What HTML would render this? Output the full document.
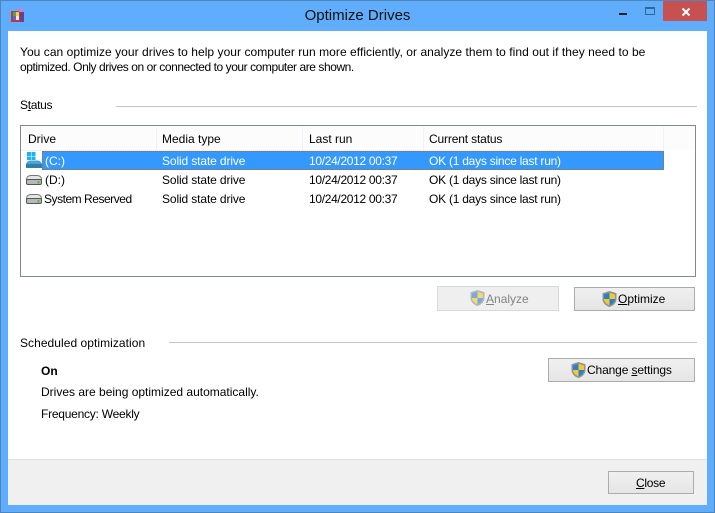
<!DOCTYPE html>
<html><head><meta charset="utf-8"><style>
html,body{margin:0;padding:0}
body{width:715px;height:513px;position:relative;overflow:hidden;background:#5fadfb;font:12px/16px "Liberation Sans",sans-serif;color:#000}
.a{position:absolute;white-space:nowrap}
.btn{position:absolute;box-sizing:border-box;border:1px solid #acacac;background:linear-gradient(#f0f0f0,#e5e5e5);text-align:center}
.sep{position:absolute;height:1px;background:#c4c4c4}
.col{position:absolute;top:127px;height:23px;width:1px;background:#eef2f8}
.s{letter-spacing:-.12px}.d{letter-spacing:-.32px}.k{letter-spacing:-.24px}
</style></head><body>
<svg width="0" height="0" style="position:absolute"><defs>
<g id="sh"><path d="M7.500 0 14.500 2.300V8C14.500 12 11 15 7.500 16 4 15 .5 12 .5 8V2.300Z" fill="#8f9296"/><path d="M7.500 1.800V8H2V3.500Z" fill="#2a7fd0"/><path d="M7.500 1.800 13 3.500V8H7.500Z" fill="#f4c92e"/><path d="M2 8H7.500V14.300C5 13.300 2 11.300 2 8Z" fill="#f4c92e"/><path d="M13 8H7.500V14.300C10 13.300 13 11.300 13 8Z" fill="#2a7fd0"/></g>
<g id="hd"><path d="M.5 7C1 4.500 3 3.500 5 3.500H11C13 3.500 15 4.500 15.500 7V8H.5Z" fill="#e4e6e6" stroke="#777"/><rect x=".5" y="7.500" width="15" height="5" rx="1.500" fill="#b4b9ba" stroke="#555"/><rect x="11.500" y="9" width="2" height="2.500" fill="#54c02c"/></g>
</defs></svg>

<div class="a" style="left:0;top:0;width:713px;height:511px;border:1px solid #4d86bd"></div>
<svg class="a" style="left:10px;top:8px" width="16" height="16"><rect x="1" y="3" width="10" height="11" fill="#c8333c"/><rect x="3" y="4" width="3" height="4" fill="#4fa84f"/><rect x="6" y="4" width="3" height="4" fill="#e8d84e"/><rect x="3" y="8" width="3" height="4" fill="#3b78c8"/><rect x="6" y="8" width="3" height="4" fill="#eee"/><rect x="10" y="4" width="4" height="10" fill="#6b3f8f"/><rect x="9" y="0" width="4" height="4" fill="#c87fd8"/></svg>
<div class="a" style="left:0;top:6px;width:715px;text-align:center;font-size:15px;line-height:20px;color:#111">Optimize Drives</div>

<svg class="a" style="left:619px;top:7px" width="40" height="12">
<rect x="0" y="6" width="8" height="2" fill="#222"/>
<rect x="26.500" y="0.500" width="9" height="7" fill="none" stroke="#2f6797"/><rect x="26" y="0" width="10" height="2" fill="#2f6797"/>
</svg>
<div class="a" style="left:663px;top:1px;width:44px;height:20px;background:#c75050"></div>
<svg class="a" style="left:680px;top:6px" width="12" height="12"><path d="M2.500 2.500 9.500 9.500M9.500 2.500 2.500 9.500" stroke="#fff" stroke-width="2" fill="none"/></svg>

<div class="a" style="left:8px;top:31px;width:699px;height:474px;background:#fff"></div>
<div class="a" style="left:8px;top:459px;width:699px;height:46px;background:#f0f0f0;border-top:1px solid #dfdfdf;box-sizing:border-box"></div>

<div class="a" style="left:20px;top:44px;letter-spacing:.05px">You can optimize your drives to help your computer run more efficiently, or analyze them to find out if they need to be</div>
<div class="a" style="left:20px;top:59px;letter-spacing:-.44px">optimized. Only drives on or connected to your computer are shown.</div>

<div class="a" style="left:20px;top:97px;letter-spacing:-.3px">S<u>t</u>atus</div>
<div class="sep" style="left:116px;top:106px;width:581px"></div>

<div class="a" style="left:20px;top:125px;width:676px;height:152px;box-sizing:border-box;border:1px solid #828790"></div>
<div class="a" style="left:21px;top:126px;width:674px;height:24px;background:#fcfcfc"></div>
<div class="a" style="left:21px;top:150px;width:643px;height:1px;background:#eef2f8"></div>
<div class="col" style="left:156px"></div><div class="col" style="left:302px"></div><div class="col" style="left:423px"></div><div class="col" style="left:663px"></div>
<div class="a" style="left:28px;top:131px">Drive</div>
<div class="a" style="left:162px;top:131px">Media type</div>
<div class="a" style="left:309px;top:131px">Last run</div>
<div class="a" style="left:429px;top:131px;letter-spacing:-.15px">Current status</div>

<div class="a" style="left:42px;top:151px;width:622px;height:19px;background:#3399ff;outline:1px dotted #b06a20;outline-offset:-1px"></div>
<svg class="a" style="left:26px;top:151px" width="16" height="19"><rect x="1" y="1" width="4" height="4" fill="#1fb4e8"/><rect x="5.500" y="1" width="4" height="4" fill="#1fb4e8"/><rect x="1" y="5.500" width="4" height="3.500" fill="#1fb4e8"/><rect x="5.500" y="5.500" width="4" height="3.500" fill="#1fb4e8"/><path d="M0 13C1 10 3 9.500 5 9.500H11C13 9.500 15 10 16 13V17H0Z" fill="#4aa3d8"/><rect x="0" y="13" width="16" height="4" fill="#2f7fa8"/></svg>
<svg class="a" style="left:26px;top:172px" width="16" height="15"><use href="#hd"/></svg>
<svg class="a" style="left:26px;top:191px" width="16" height="15"><use href="#hd"/></svg>

<div class="a" style="left:45px;top:153px;color:#fff">(C:)</div>
<div class="a s" style="left:162px;top:153px;color:#fff">Solid state drive</div>
<div class="a d" style="left:309px;top:153px;color:#fff">10/24/2012 00:37</div>
<div class="a k" style="left:429px;top:153px;color:#fff">OK (1 days since last run)</div>

<div class="a" style="left:45px;top:172px">(D:)</div>
<div class="a s" style="left:162px;top:172px">Solid state drive</div>
<div class="a d" style="left:309px;top:172px">10/24/2012 00:37</div>
<div class="a k" style="left:429px;top:172px">OK (1 days since last run)</div>

<div class="a" style="left:44px;top:191px;letter-spacing:-.47px">System Reserved</div>
<div class="a s" style="left:162px;top:191px">Solid state drive</div>
<div class="a d" style="left:309px;top:191px">10/24/2012 00:37</div>
<div class="a k" style="left:429px;top:191px">OK (1 days since last run)</div>

<div class="btn" style="left:437px;top:286px;width:122px;height:25px;border:1px solid #d9d9d9;background:#efefef"></div>
<svg class="a" style="left:470px;top:290px;opacity:.6" width="15" height="16"><use href="#sh"/></svg>
<div class="a" style="left:486px;top:291px;color:#838383"><u>A</u>nalyze</div>

<div class="btn" style="left:574px;top:287px;width:121px;height:24px"></div>
<svg class="a" style="left:602px;top:291px" width="15" height="16"><use href="#sh"/></svg>
<div class="a" style="left:618px;top:291px"><u>O</u>ptimize</div>

<div class="a" style="left:20px;top:335px;letter-spacing:.05px">Scheduled optimization</div>
<div class="sep" style="left:169px;top:342px;width:528px"></div>

<div class="btn" style="left:548px;top:358px;width:147px;height:24px"></div>
<svg class="a" style="left:571px;top:362px" width="15" height="16"><use href="#sh"/></svg>
<div class="a" style="left:587px;top:362px;letter-spacing:-.13px">Change <u>s</u>ettings</div>

<div class="a" style="left:41px;top:363px;font-weight:bold">On</div>
<div class="a" style="left:41px;top:384px">Drives are being optimized automatically.</div>
<div class="a" style="left:41px;top:406px;letter-spacing:-.24px">Frequency: Weekly</div>

<div class="btn" style="left:608px;top:471px;width:86px;height:23px"></div>
<div class="a" style="left:636px;top:475px;letter-spacing:-.3px"><u>C</u>lose</div>
</body></html>
